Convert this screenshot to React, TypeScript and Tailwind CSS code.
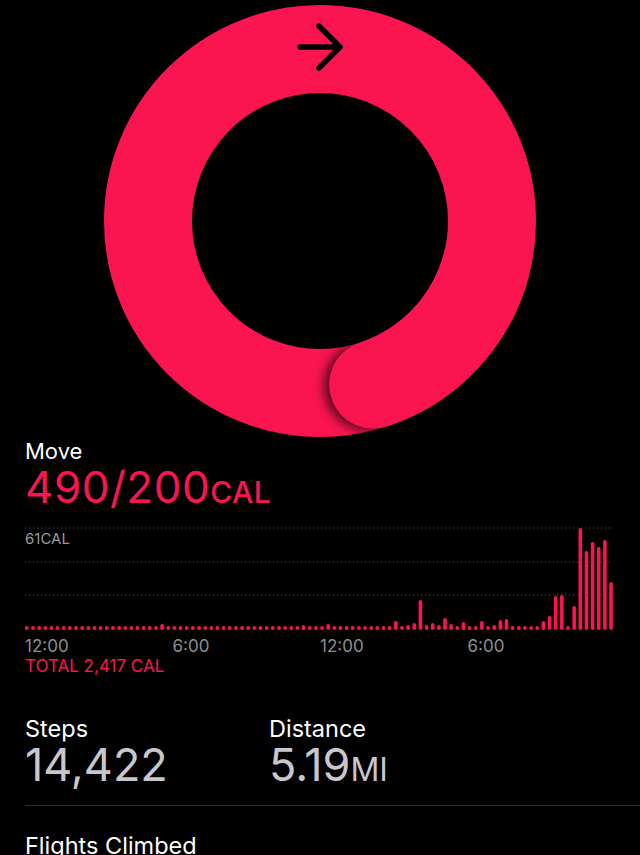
const PINK = "#fa1550";

// 15-minute buckets across the day, heights in px (max 102 = 61 cal)
const bars: number[] = Array.from({ length: 96 }, () => 4);
const bumps: Record<number, number> = {
  22: 6, 45: 5, 49: 6, 60: 9, 62: 5, 63: 7, 64: 30, 65: 5, 66: 7, 67: 5, 68: 12,
  69: 6, 71: 8, 74: 9, 76: 5, 77: 10, 78: 11, 84: 9, 85: 14, 86: 34, 87: 35,
  89: 24, 90: 102, 91: 79, 92: 88, 93: 83, 94: 90, 95: 48,
};
Object.entries(bumps).forEach(([i, h]) => (bars[Number(i)] = h));

function Ring() {
  const cx = 320;
  const cy = 221;
  const r = 172;
  const pt = (deg: number) => {
    const a = (deg * Math.PI) / 180;
    return [cx + r * Math.sin(a), cy - r * Math.cos(a)];
  };
  const end = 162;
  const [sx, sy] = pt(105);
  const [ex, ey] = pt(end);
  const a = (end * Math.PI) / 180;
  const shx = ex + Math.cos(a) * 5;
  const shy = ey + Math.sin(a) * 5;

  return (
    <svg width="640" height="438" viewBox="0 0 640 438" className="block">
      <defs>
        <filter id="capShadow" x="-50%" y="-50%" width="200%" height="200%">
          <feGaussianBlur stdDeviation="6" />
        </filter>
      </defs>
      <circle cx={cx} cy={cy} r={r} fill="none" stroke={PINK} strokeWidth="88" />
      <circle cx={shx} cy={shy} r="44" fill="#000" opacity="0.7" filter="url(#capShadow)" />
      <path
        d={`M ${sx} ${sy} A ${r} ${r} 0 0 1 ${ex} ${ey}`}
        fill="none"
        stroke={PINK}
        strokeWidth="88"
      />
      <circle cx={ex} cy={ey} r="44" fill={PINK} />
      <path
        d="M300 47 H339 M319 26 L340 47 L319 68"
        fill="none"
        stroke="#000"
        strokeWidth="5.5"
        strokeLinecap="round"
        strokeLinejoin="round"
      />
    </svg>
  );
}

function Chart() {
  return (
    <div className="relative -mt-[3px]">
      <svg width="640" height="122" viewBox="0 0 640 122" className="block">
        {[17, 51, 84].map((y) => (
          <line key={y} x1="25" x2="612" y1={y} y2={y} stroke="#5a5a5e" strokeWidth="1" strokeDasharray="1 3" />
        ))}
        {bars.map((h, i) => (
          <rect key={i} x={25 + i * 6.15} y={119 - h} width="3.6" height={h} rx="1.8" fill={PINK} />
        ))}
      </svg>
      <div className="absolute left-[25px] top-[19px] text-[15px] leading-[18px] text-[#98989d]">61CAL</div>
    </div>
  );
}

export default function App() {
  return (
    <div className="w-[640px] h-[855px] overflow-hidden bg-black font-['Inter',sans-serif]">
      <Ring />
      <div className="px-[25px]">
        <div className="text-white text-[22px] leading-[26px]">Move</div>
        <div className="mt-px text-[44px] leading-[44px] tracking-[0.5px]" style={{ color: PINK }}>
          490/200<span className="text-[30px] font-medium">CAL</span>
        </div>
      </div>
      <Chart />
      <div className="px-[25px]">
        <div className="mt-[3px] grid grid-cols-4 w-[590px] text-[17px] leading-5 text-[#8e8e93]">
          <div>12:00</div>
          <div>6:00</div>
          <div>12:00</div>
          <div>6:00</div>
        </div>
        <div className="text-[17px] leading-5" style={{ color: PINK }}>TOTAL 2,417 CAL</div>

        <div className="mt-10 flex">
          <div className="w-[244px]">
            <div className="text-white text-[23.5px] leading-[26px]">Steps</div>
            <div className="text-[45px] leading-[46px] text-[#c7c7cc]">14,422</div>
          </div>
          <div>
            <div className="text-white text-[23.5px] leading-[26px]">Distance</div>
            <div className="text-[45px] leading-[46px] text-[#c7c7cc]">
              5.19<span className="text-[32px]">MI</span>
            </div>
          </div>
        </div>
      </div>
      <div className="ml-[25px] mt-3 h-px bg-[#2c2c2e]" />
      <div className="px-[25px] mt-[26px] text-white text-[23.5px] leading-7">Flights Climbed</div>
    </div>
  );
}
